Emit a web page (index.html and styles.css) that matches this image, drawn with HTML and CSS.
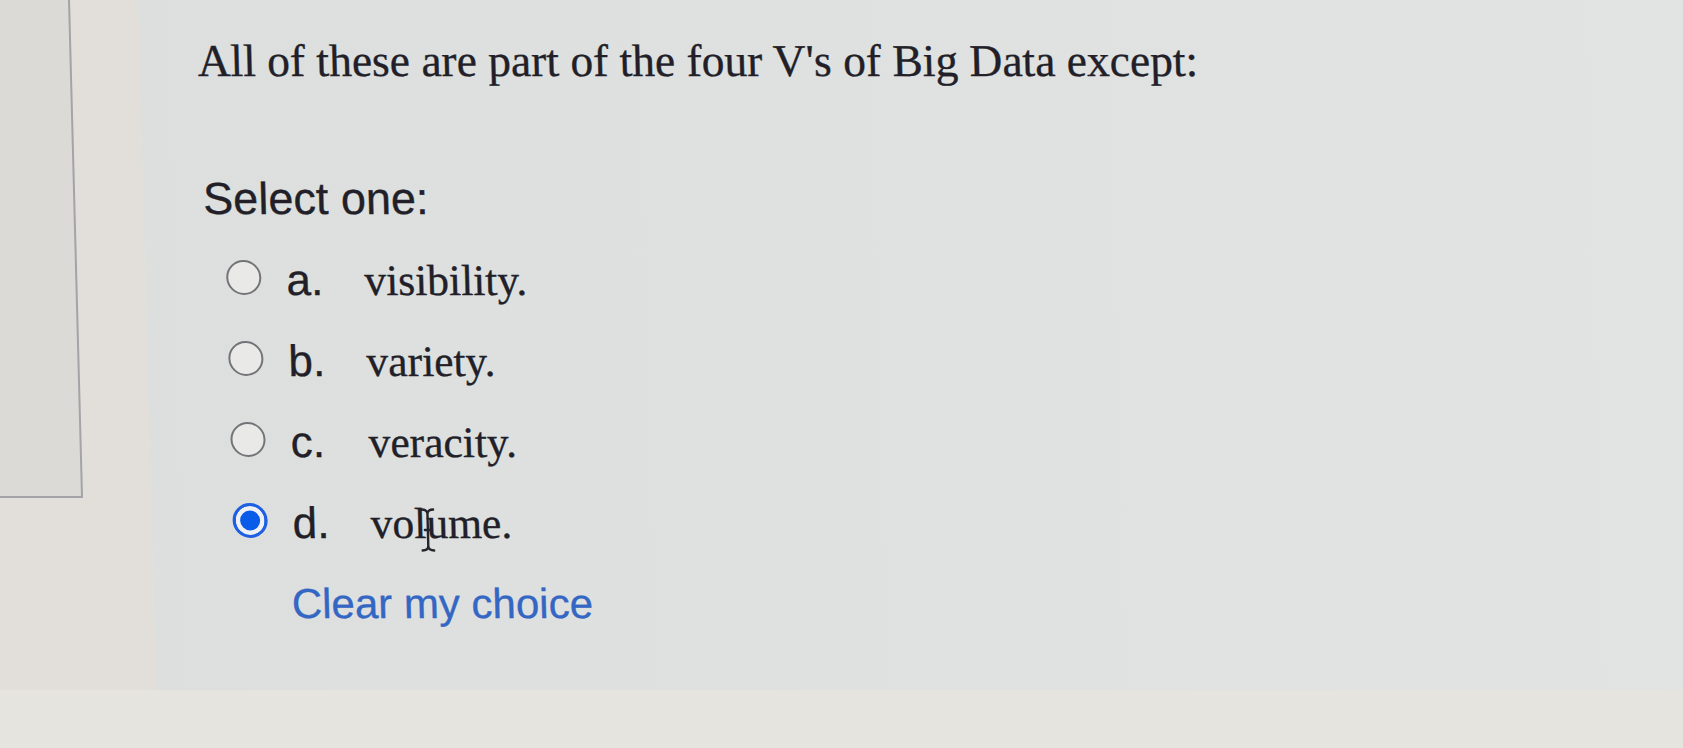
FILE: index.html
```html
<!DOCTYPE html>
<html lang="en">
<head>
<meta charset="utf-8">
<title>Question</title>
<link rel="stylesheet" href="styles.css">
</head>
<body>
<div class="page">
  <div class="side">
    <div class="side-box"></div>
  </div>
  <main class="que">
    <div class="qtext">All of these are part of the four V's of Big Data except:</div>
    <div class="prompt">Select one:</div>
    <div class="answers">
      <label class="opt"><input class="radio" type="radio" name="q1"><span class="num">a.</span><span class="atext">visibility.</span></label>
      <label class="opt"><input class="radio" type="radio" name="q1"><span class="num">b.</span><span class="atext">variety.</span></label>
      <label class="opt"><input class="radio" type="radio" name="q1"><span class="num">c.</span><span class="atext">veracity.</span></label>
      <label class="opt"><input class="radio" type="radio" name="q1" checked><span class="num">d.</span><span class="atext has-cursor">volume.<svg class="ibeam" viewBox="0 0 14 44" width="14" height="44"><path d="M1 1.5 Q7 1.5 7 6 V38 Q7 42.5 1 42.5 M13 1.5 Q7 1.5 7 6 M13 42.5 Q7 42.5 7 38 M4 22 H10" fill="none" stroke="#26252c" stroke-width="2.4" stroke-linecap="round"/></svg></span></label>
    </div>
    <div class="clear"><a href="#" class="clear-link">Clear my choice</a></div>
  </main>
</div>
</body>
</html>
```

FILE: styles.css
```css
html, body {
  margin: 0;
  padding: 0;
}
body {
  width: 1683px;
  height: 748px;
  overflow: hidden;
  background: #e6e4de;
  font-family: "Liberation Sans", Arial, sans-serif;
  color: #221f29;
}
.page {
  display: flex;
  align-items: flex-start;
  width: 1740px;
  height: 748px;
  margin-left: -20px;
  transform: skewX(1.5deg);
  transform-origin: 0 0;
}
.side {
  width: 158px;
  flex: none;
  height: 690px;
  background: #e2dfda;
}
.side-box {
  width: 88px;
  height: 496px;
  background: #dbdad6;
  border-right: 2px solid #a4a4a8;
  border-bottom: 2px solid #a4a4a8;
}
.que {
  flex: 1;
  height: 690px;
  box-sizing: border-box;
  padding: 34px 0 0 58px;
  background: linear-gradient(90deg, #dcdfdd 0%, #dfe2e1 60%, #e1e4e3 100%);
  -webkit-text-stroke: 0.35px currentColor;
}
.qtext {
  font-family: "Liberation Serif", "Times New Roman", serif;
  font-size: 45.5px;
  line-height: 54px;
  margin: 0 0 70px;
}
.prompt {
  height: 81px;
  display: flex;
  align-items: center;
  font-size: 45px;
  line-height: 45px;
  padding-left: 2px;
}
.answers {
  padding-left: 23px;
}
.opt {
  height: 81px;
  display: flex;
  align-items: center;
}
.radio {
  appearance: none;
  -webkit-appearance: none;
  margin: 0 25px 0 0;
  width: 35px;
  height: 35px;
  box-sizing: border-box;
  border-radius: 50%;
  border: 2px solid #747378;
  background: #e9e9e8;
  flex: none;
  position: relative;
  top: -2px;
}
.radio:checked {
  border: 3px solid #1f5fe2;
  background: #0b5be9;
  box-shadow: inset 0 0 0 4.5px #eef0f6;
}
.num {
  width: 78px;
  flex: none;
  font-size: 44px;
  line-height: 44px;
}
.atext {
  font-family: "Liberation Serif", "Times New Roman", serif;
  font-size: 43.5px;
  line-height: 44px;
}
.has-cursor {
  position: relative;
}
.ibeam {
  position: absolute;
  left: 50px;
  top: 7px;
  -webkit-text-stroke: 0;
}
.clear {
  height: 81px;
  display: flex;
  align-items: center;
  padding-left: 80px;
}
.clear-link {
  font-size: 42px;
  line-height: 42px;
  color: #3466c4;
  text-decoration: none;
}
```
